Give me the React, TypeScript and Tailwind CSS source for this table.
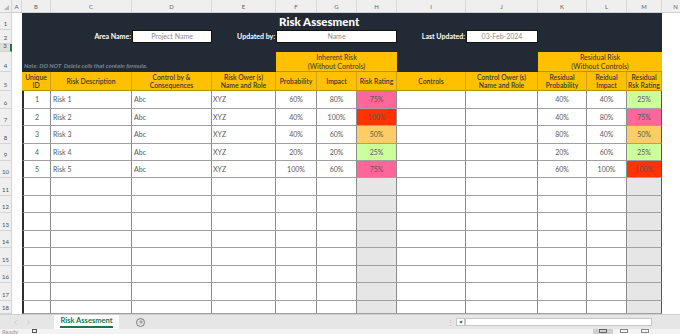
import clsx from "clsx";
import { ChevronLeft, ChevronRight, Plus } from "lucide-react";
import type { ReactNode } from "react";

const COLS = [
  { id: "B", w: "w-[29px]" },
  { id: "C", w: "w-[81px]" },
  { id: "D", w: "w-[80px]" },
  { id: "E", w: "w-[64px]" },
  { id: "F", w: "w-[41px]" },
  { id: "G", w: "w-[40px]" },
  { id: "H", w: "w-[40px]" },
  { id: "I", w: "w-[69px]" },
  { id: "J", w: "w-[72px]" },
  { id: "K", w: "w-[49px]" },
  { id: "L", w: "w-[40px]" },
  { id: "M", w: "w-[35px]" },
];

const HEADERS = [
  ["Unique", "ID"],
  ["Risk Description"],
  ["Control by &", "Consequences"],
  ["Risk Ower (s)", "Name and Role"],
  ["Probability"],
  ["Impact"],
  ["Risk Rating"],
  ["Controls"],
  ["Control Ower (s)", "Name and Role"],
  ["Residual", "Probability"],
  ["Reidual", "Impact"],
  ["Residual", "Rsk Rating"],
];

const RISKS = [
  { id: 1, p: "60%", i: "80%", r: "75%", rp: "40%", ri: "40%", rr: "25%" },
  { id: 2, p: "40%", i: "100%", r: "100%", rp: "40%", ri: "80%", rr: "75%" },
  { id: 3, p: "40%", i: "60%", r: "50%", rp: "80%", ri: "40%", rr: "50%" },
  { id: 4, p: "20%", i: "20%", r: "25%", rp: "20%", ri: "60%", rr: "25%" },
  { id: 5, p: "100%", i: "60%", r: "75%", rp: "60%", ri: "100%", rr: "100%" },
];

const RATING: Record<string, string> = {
  "25%": "bg-[#ccff99]",
  "50%": "bg-[#ffcc66]",
  "75%": "bg-[#ff6699]",
  "100%": "bg-[#ff3300]",
};

const DATA_H = ["h-[18px]", "h-[17px]", "h-[18px]", "h-[17px]", "h-[17px]"];
const EMPTY_H = [
  "h-[18px]",
  "h-[17px]",
  "h-[18px]",
  "h-[17px]",
  "h-[18px]",
  "h-[17px]",
  "h-[18px]",
  "h-[13px]",
];

function Row({
  n,
  h,
  active,
  children,
}: {
  n: number;
  h: string;
  active?: boolean;
  children: ReactNode;
}) {
  return (
    <div className={clsx("flex shrink-0", h)}>
      <div
        className={clsx(
          "w-[12px] shrink-0 flex items-end justify-center pb-[2px] border-b border-r border-[#d4d4d4] text-[6px] leading-none text-[#4d4d4d]",
          active ? "bg-[#dedede] border-r-2 border-r-[#217346]" : "bg-[#efefef]"
        )}
      >
        {n}
      </div>
      <div className="w-[10px] shrink-0 bg-white" />
      {children}
      <div className="flex-1 bg-white" />
    </div>
  );
}

function Cell({
  w,
  className,
  children,
}: {
  w: string;
  className?: string;
  children?: ReactNode;
}) {
  return (
    <div
      className={clsx(
        w,
        "shrink-0 flex items-center overflow-hidden whitespace-nowrap border-r border-b border-r-[#8c8c8c] border-b-[#a0a0a0] text-[7px] leading-none text-[#595959]",
        className
      )}
    >
      {children}
    </div>
  );
}

function Box({ w, text }: { w: string; text: string }) {
  return (
    <div
      className={clsx(
        w,
        "shrink-0 h-[13px] bg-white border border-[#111] flex items-center justify-center text-[7px] text-[#8c8c8c]"
      )}
    >
      {text}
    </div>
  );
}

function Label({ w, text }: { w: string; text: string }) {
  return (
    <div
      className={clsx(
        w,
        "shrink-0 h-[13px] flex items-center justify-end pr-[1px] text-[7px] font-bold text-white"
      )}
    >
      {text}
    </div>
  );
}

export default function App() {
  return (
    <div className="w-[680px] h-[334px] overflow-hidden bg-white flex flex-col font-['Lato','Liberation_Sans',sans-serif]">
      {/* column letters */}
      <div className="flex h-[13px] shrink-0 bg-[#efefef] border-b border-[#d0d0d0] text-[6px] text-[#5f5f5f]">
        <div className="w-[12px] shrink-0 relative border-r border-[#d4d4d4]">
          <div className="absolute right-[2px] bottom-[2px] w-0 h-0 border-l-[5px] border-l-transparent border-b-[5px] border-b-[#b4b4b4]" />
        </div>
        <div className="w-[10px] shrink-0 flex items-center justify-center border-r border-[#d9d9d9]">
          A
        </div>
        {COLS.map((c) => (
          <div
            key={c.id}
            className={clsx(
              c.w,
              "shrink-0 flex items-center justify-center border-r border-[#d9d9d9]"
            )}
          >
            {c.id}
          </div>
        ))}
        <div className="w-[28px] shrink-0 flex items-center justify-center border-r border-[#d9d9d9]">
          N
        </div>
      </div>

      {/* title */}
      <Row n={1} h="h-[17px]">
        <div className="w-[640px] shrink-0 bg-[#222a35] flex items-center pl-[257px]">
          <span className="text-[11.5px] leading-none font-black text-white">
            Risk Assesment
          </span>
        </div>
      </Row>

      {/* meta fields */}
      <Row n={2} h="h-[14px]">
        <div className="w-[640px] shrink-0 bg-[#222a35] flex items-start">
          <Label w="w-[110px]" text="Area Name:" />
          <Box w="w-[80px]" text="Project Name" />
          <Label w="w-[64px]" text="Updated by:" />
          <Box w="w-[121px]" text="Name" />
          <Label w="w-[69px]" text="Last Updated:" />
          <Box w="w-[72px]" text="03-Feb-2024" />
        </div>
      </Row>

      <Row n={3} h="h-[8px]" active>
        <div className="w-[640px] shrink-0 bg-[#222a35]" />
      </Row>

      {/* group headers */}
      <Row n={4} h="h-[20px]">
        <div className="w-[254px] shrink-0 bg-[#222a35] flex items-end pl-[2px] pb-[3px]">
          <span className="text-[6px] leading-none font-bold italic text-[#7b8591] whitespace-nowrap">
            Note: DO NOT&nbsp; Delete cells that contain formula.
          </span>
        </div>
        <div className="w-[121px] shrink-0 bg-[#ffc000] border-b border-[#bf9000] flex flex-col items-center justify-center text-[7px] leading-[9px] font-medium text-[#3d3d3d]">
          <span>Inherent Risk</span>
          <span>(Without Controls)</span>
        </div>
        <div className="w-[141px] shrink-0 bg-[#222a35]" />
        <div className="w-[124px] shrink-0 bg-[#ffc000] border-b border-[#bf9000] flex flex-col items-center justify-center text-[7px] leading-[9px] font-medium text-[#3d3d3d]">
          <span>Residual Risk</span>
          <span>(Without Controls)</span>
        </div>
      </Row>

      {/* column headers */}
      <Row n={5} h="h-[19px]">
        {COLS.map((c, idx) => (
          <div
            key={c.id}
            className={clsx(
              c.w,
              "shrink-0 bg-[#ffc000] flex flex-col items-center justify-center text-center border-r border-b border-r-[#c9a227] border-b-[#bf9000] text-[6.8px] leading-[8.5px] font-semibold text-[#383838] whitespace-nowrap overflow-hidden"
            )}
          >
            {HEADERS[idx].map((line) => (
              <span key={line}>{line}</span>
            ))}
          </div>
        ))}
      </Row>

      {/* data */}
      {RISKS.map((r, k) => (
        <Row key={r.id} n={6 + k} h={DATA_H[k]}>
          <Cell w="w-[29px]" className="justify-center border-l-2 border-l-[#2e2e2e]">
            {r.id}
          </Cell>
          <Cell w="w-[81px]" className="pl-[2px]">
            Risk {r.id}
          </Cell>
          <Cell w="w-[80px]" className="pl-[2px]">
            Abc
          </Cell>
          <Cell w="w-[64px]" className="pl-[1px]">
            XYZ
          </Cell>
          <Cell w="w-[41px]" className="justify-center">
            {r.p}
          </Cell>
          <Cell w="w-[40px]" className="justify-center">
            {r.i}
          </Cell>
          <Cell w="w-[40px]" className={clsx("justify-center", RATING[r.r])}>
            {r.r}
          </Cell>
          <Cell w="w-[69px]" />
          <Cell w="w-[72px]" />
          <Cell w="w-[49px]" className="justify-center">
            {r.rp}
          </Cell>
          <Cell w="w-[40px]" className="justify-center">
            {r.ri}
          </Cell>
          <Cell
            w="w-[35px]"
            className={clsx("justify-center border-r-[#555]", RATING[r.rr])}
          >
            {r.rr}
          </Cell>
        </Row>
      ))}

      {EMPTY_H.map((h, k) => (
        <Row key={k} n={11 + k} h={h}>
          <Cell w="w-[29px]" className="border-l-2 border-l-[#2e2e2e]" />
          <Cell w="w-[81px]" />
          <Cell w="w-[80px]" />
          <Cell w="w-[64px]" />
          <Cell w="w-[41px]" />
          <Cell w="w-[40px]" />
          <Cell w="w-[40px]" className="bg-[#e7e6e6]" />
          <Cell w="w-[69px]" />
          <Cell w="w-[72px]" />
          <Cell w="w-[49px]" />
          <Cell w="w-[40px]" />
          <Cell w="w-[35px]" className="bg-[#e7e6e6] border-r-[#555]" />
        </Row>
      ))}

      {/* sheet tabs */}
      <div className="h-[15px] shrink-0 flex items-stretch bg-[#e6e6e6] border-t border-[#cfcfcf]">
        <div className="w-[54px] shrink-0 flex items-center pl-[12px] gap-[6px] text-[#b5b5b5]">
          <ChevronLeft size={7} strokeWidth={2} />
          <ChevronRight size={7} strokeWidth={2} />
        </div>
        <div className="w-[65px] shrink-0 bg-white flex items-end justify-center pb-[1px]">
          <span className="text-[7.5px] leading-[10px] font-bold text-[#217346] border-b-2 border-[#217346] px-[1px]">
            Risk Assesment
          </span>
        </div>
        <div className="ml-[17px] self-center w-[9px] h-[9px] rounded-full border border-[#7a7a7a] flex items-center justify-center text-[#555]">
          <Plus size={6} strokeWidth={2} />
        </div>
        <div className="flex-1" />
        <div className="w-[235px] shrink-0 flex items-center">
          <div className="w-[11px] flex justify-center text-[7px] leading-none text-[#b0b0b0]">
            ⋮
          </div>
          <div className="w-[9px] h-[8px] bg-white border border-[#c6c6c6] flex items-center justify-center text-[4px] text-[#555]">
            ◀
          </div>
          <div className="w-[187px] h-[8px] bg-white border border-[#c6c6c6]" />
        </div>
      </div>

      {/* status bar */}
      <div className="h-[5px] shrink-0 flex items-start bg-[#f3f3f3] overflow-hidden">
        <span className="ml-[2px] text-[6px] leading-[6px] text-[#999]">Ready</span>
        <span className="ml-[14px] w-[5px] h-[4px] border border-[#555]" />
        <div className="flex-1" />
        <div className="w-[20px] h-[5px] bg-[#cfcfcf] flex justify-center">
          <span className="w-[8px] h-[4px] border border-[#666]" />
        </div>
        <span className="ml-[7px] w-[8px] h-[4px] border border-[#888]" />
        <span className="ml-[13px] w-[8px] h-[4px] border border-[#888]" />
        <div className="w-[31px]" />
      </div>
    </div>
  );
}
